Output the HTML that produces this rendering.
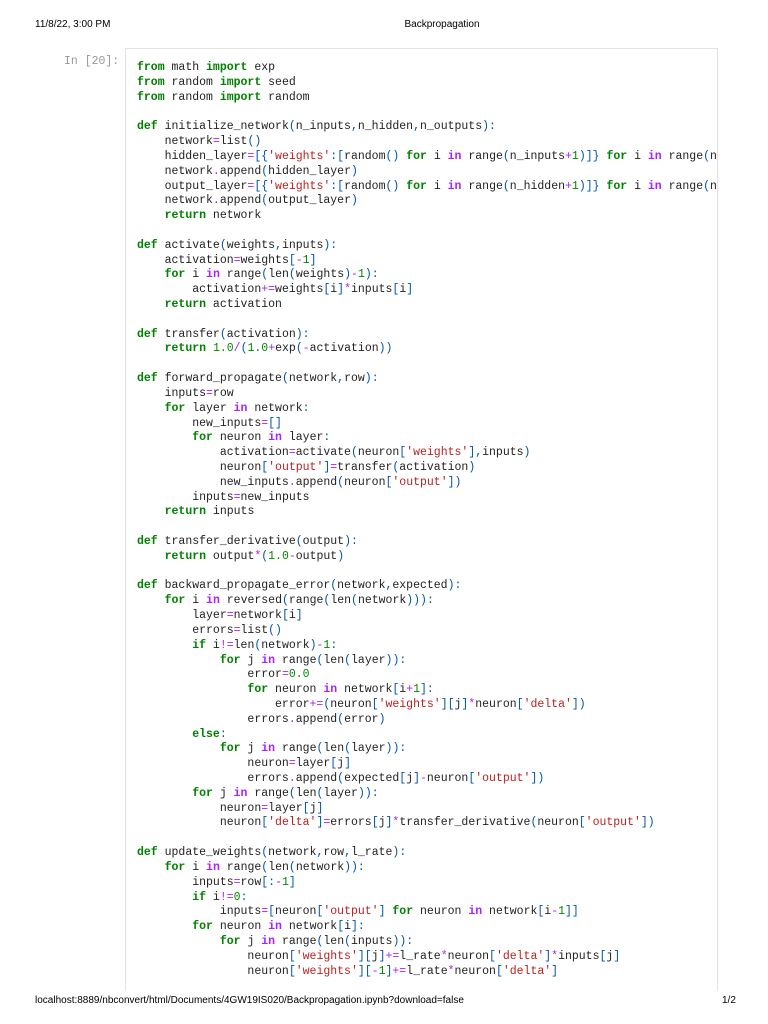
<!DOCTYPE html>
<html><head><meta charset="utf-8"><style>
body{margin:0;width:768px;height:1024px;background:#fff;position:relative;overflow:hidden;font-family:"Liberation Sans",sans-serif}
.hd{position:absolute;top:19px;font-size:10px;color:#000}
.box{position:absolute;left:125px;top:48px;width:591px;height:942px;border:1px solid #e2e2e2;border-bottom:none;background:#fff;overflow:hidden}
pre{margin:0;position:absolute;left:11px;top:12px;font-family:"Liberation Mono",monospace;font-size:11.5px;line-height:14.82px;color:#222;white-space:pre}
.k{color:#008000;font-weight:bold}.o{color:#aa22ff}.s{color:#ba2121}.n{color:#008800}.p{color:#0055aa}.w{color:#aa22ff;font-weight:bold}
.pr{position:absolute;left:64px;top:55px;font-family:"Liberation Mono",monospace;font-size:11.5px;color:#999}
</style></head><body>
<div class="hd" style="left:35px">11/8/22, 3:00 PM</div>
<div class="hd" style="left:0;width:884px;text-align:center">Backpropagation</div>
<div class="pr">In [20]:</div>
<div class="box"><pre><span class="k">from</span> math <span class="k">import</span> exp
<span class="k">from</span> random <span class="k">import</span> seed
<span class="k">from</span> random <span class="k">import</span> random

<span class="k">def</span> initialize_network<span class="p">(</span>n_inputs<span class="p">,</span>n_hidden<span class="p">,</span>n_outputs<span class="p">):</span>
    network<span class="o">=</span>list<span class="p">()</span>
    hidden_layer<span class="o">=</span><span class="p">[{</span><span class="s">'weights'</span><span class="p">:[</span>random<span class="p">()</span> <span class="k">for</span> i <span class="w">in</span> range<span class="p">(</span>n_inputs<span class="o">+</span><span class="n">1</span><span class="p">)]}</span> <span class="k">for</span> i <span class="w">in</span> range<span class="p">(</span>n_hidden<span class="p">)]</span>
    network<span class="o">.</span>append<span class="p">(</span>hidden_layer<span class="p">)</span>
    output_layer<span class="o">=</span><span class="p">[{</span><span class="s">'weights'</span><span class="p">:[</span>random<span class="p">()</span> <span class="k">for</span> i <span class="w">in</span> range<span class="p">(</span>n_hidden<span class="o">+</span><span class="n">1</span><span class="p">)]}</span> <span class="k">for</span> i <span class="w">in</span> range<span class="p">(</span>n_outputs<span class="p">)]</span>
    network<span class="o">.</span>append<span class="p">(</span>output_layer<span class="p">)</span>
    <span class="k">return</span> network

<span class="k">def</span> activate<span class="p">(</span>weights<span class="p">,</span>inputs<span class="p">):</span>
    activation<span class="o">=</span>weights<span class="p">[</span><span class="o">-</span><span class="n">1</span><span class="p">]</span>
    <span class="k">for</span> i <span class="w">in</span> range<span class="p">(</span>len<span class="p">(</span>weights<span class="p">)</span><span class="o">-</span><span class="n">1</span><span class="p">):</span>
        activation<span class="o">+=</span>weights<span class="p">[</span>i<span class="p">]</span><span class="o">*</span>inputs<span class="p">[</span>i<span class="p">]</span>
    <span class="k">return</span> activation

<span class="k">def</span> transfer<span class="p">(</span>activation<span class="p">):</span>
    <span class="k">return</span> <span class="n">1.0</span><span class="o">/</span><span class="p">(</span><span class="n">1.0</span><span class="o">+</span>exp<span class="p">(</span><span class="o">-</span>activation<span class="p">))</span>

<span class="k">def</span> forward_propagate<span class="p">(</span>network<span class="p">,</span>row<span class="p">):</span>
    inputs<span class="o">=</span>row
    <span class="k">for</span> layer <span class="w">in</span> network<span class="p">:</span>
        new_inputs<span class="o">=</span><span class="p">[]</span>
        <span class="k">for</span> neuron <span class="w">in</span> layer<span class="p">:</span>
            activation<span class="o">=</span>activate<span class="p">(</span>neuron<span class="p">[</span><span class="s">'weights'</span><span class="p">],</span>inputs<span class="p">)</span>
            neuron<span class="p">[</span><span class="s">'output'</span><span class="p">]</span><span class="o">=</span>transfer<span class="p">(</span>activation<span class="p">)</span>
            new_inputs<span class="o">.</span>append<span class="p">(</span>neuron<span class="p">[</span><span class="s">'output'</span><span class="p">])</span>
        inputs<span class="o">=</span>new_inputs
    <span class="k">return</span> inputs

<span class="k">def</span> transfer_derivative<span class="p">(</span>output<span class="p">):</span>
    <span class="k">return</span> output<span class="o">*</span><span class="p">(</span><span class="n">1.0</span><span class="o">-</span>output<span class="p">)</span>

<span class="k">def</span> backward_propagate_error<span class="p">(</span>network<span class="p">,</span>expected<span class="p">):</span>
    <span class="k">for</span> i <span class="w">in</span> reversed<span class="p">(</span>range<span class="p">(</span>len<span class="p">(</span>network<span class="p">))):</span>
        layer<span class="o">=</span>network<span class="p">[</span>i<span class="p">]</span>
        errors<span class="o">=</span>list<span class="p">()</span>
        <span class="k">if</span> i<span class="o">!=</span>len<span class="p">(</span>network<span class="p">)</span><span class="o">-</span><span class="n">1</span><span class="p">:</span>
            <span class="k">for</span> j <span class="w">in</span> range<span class="p">(</span>len<span class="p">(</span>layer<span class="p">)):</span>
                error<span class="o">=</span><span class="n">0.0</span>
                <span class="k">for</span> neuron <span class="w">in</span> network<span class="p">[</span>i<span class="o">+</span><span class="n">1</span><span class="p">]:</span>
                    error<span class="o">+=</span><span class="p">(</span>neuron<span class="p">[</span><span class="s">'weights'</span><span class="p">][</span>j<span class="p">]</span><span class="o">*</span>neuron<span class="p">[</span><span class="s">'delta'</span><span class="p">])</span>
                errors<span class="o">.</span>append<span class="p">(</span>error<span class="p">)</span>
        <span class="k">else</span><span class="p">:</span>
            <span class="k">for</span> j <span class="w">in</span> range<span class="p">(</span>len<span class="p">(</span>layer<span class="p">)):</span>
                neuron<span class="o">=</span>layer<span class="p">[</span>j<span class="p">]</span>
                errors<span class="o">.</span>append<span class="p">(</span>expected<span class="p">[</span>j<span class="p">]</span><span class="o">-</span>neuron<span class="p">[</span><span class="s">'output'</span><span class="p">])</span>
        <span class="k">for</span> j <span class="w">in</span> range<span class="p">(</span>len<span class="p">(</span>layer<span class="p">)):</span>
            neuron<span class="o">=</span>layer<span class="p">[</span>j<span class="p">]</span>
            neuron<span class="p">[</span><span class="s">'delta'</span><span class="p">]</span><span class="o">=</span>errors<span class="p">[</span>j<span class="p">]</span><span class="o">*</span>transfer_derivative<span class="p">(</span>neuron<span class="p">[</span><span class="s">'output'</span><span class="p">])</span>

<span class="k">def</span> update_weights<span class="p">(</span>network<span class="p">,</span>row<span class="p">,</span>l_rate<span class="p">):</span>
    <span class="k">for</span> i <span class="w">in</span> range<span class="p">(</span>len<span class="p">(</span>network<span class="p">)):</span>
        inputs<span class="o">=</span>row<span class="p">[:</span><span class="o">-</span><span class="n">1</span><span class="p">]</span>
        <span class="k">if</span> i<span class="o">!=</span><span class="n">0</span><span class="p">:</span>
            inputs<span class="o">=</span><span class="p">[</span>neuron<span class="p">[</span><span class="s">'output'</span><span class="p">]</span> <span class="k">for</span> neuron <span class="w">in</span> network<span class="p">[</span>i<span class="o">-</span><span class="n">1</span><span class="p">]]</span>
        <span class="k">for</span> neuron <span class="w">in</span> network<span class="p">[</span>i<span class="p">]:</span>
            <span class="k">for</span> j <span class="w">in</span> range<span class="p">(</span>len<span class="p">(</span>inputs<span class="p">)):</span>
                neuron<span class="p">[</span><span class="s">'weights'</span><span class="p">][</span>j<span class="p">]</span><span class="o">+=</span>l_rate<span class="o">*</span>neuron<span class="p">[</span><span class="s">'delta'</span><span class="p">]</span><span class="o">*</span>inputs<span class="p">[</span>j<span class="p">]</span>
                neuron<span class="p">[</span><span class="s">'weights'</span><span class="p">][</span><span class="o">-</span><span class="n">1</span><span class="p">]</span><span class="o">+=</span>l_rate<span class="o">*</span>neuron<span class="p">[</span><span class="s">'delta'</span><span class="p">]</span></pre></div>
<div class="hd" style="left:35px;top:995px">localhost:8889/nbconvert/html/Documents/4GW19IS020/Backpropagation.ipynb?download=false</div>
<div class="hd" style="left:722px;top:995px">1/2</div>
</body></html>
